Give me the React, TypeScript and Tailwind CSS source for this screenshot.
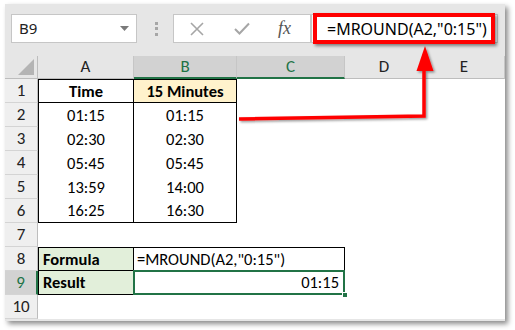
import type { ReactNode } from 'react'

const CELL_FONT = "font-['Calibri','Carlito','Lato',sans-serif]"
const UI_FONT = "font-['Segoe_UI','Noto_Sans',sans-serif]"

const times = [
  ['01:15', '01:15'],
  ['02:30', '02:30'],
  ['05:45', '05:45'],
  ['13:59', '14:00'],
  ['16:25', '16:30'],
]

function RowHead({ n, active = false }: { n: number; active?: boolean }) {
  return (
    <div
      className={`flex items-center justify-center border-b border-[#d4d4d4] text-[17px] ${CELL_FONT} ${
        active
          ? 'bg-[#d2d2d2] text-[#217346] border-r-2 border-r-[#217346]'
          : 'bg-[#efefef] text-[#222] border-r border-r-[#bdbdbd]'
      }`}
    >
      {n}
    </div>
  )
}

function ColHead({ label, active = false }: { label: string; active?: boolean }) {
  return (
    <div
      className={`flex items-center justify-center border-r border-[#c6c6c6] text-[17px] ${CELL_FONT} ${
        active
          ? 'bg-[#d2d2d2] text-[#217346] border-b-2 border-b-[#217346]'
          : 'bg-[#e6e6e6] text-[#222] border-b border-b-[#bdbdbd]'
      }`}
    >
      {label}
    </div>
  )
}

function Cell({ className = '', children }: { className?: string; children?: ReactNode }) {
  return <div className={`flex items-center text-[16.5px] text-black ${CELL_FONT} ${className}`}>{children}</div>
}

function Empty({ n = 3 }: { n?: number }) {
  return (
    <>
      {Array.from({ length: n }, (_, i) => (
        <div key={i} className="bg-white" />
      ))}
    </>
  )
}

export default function App() {
  return (
    <div className="relative h-[330px] w-[515px] overflow-hidden bg-white pl-[5px] pt-[4px]">
      <div className="h-[317px] w-[500px] bg-[#e6e6e6] shadow-[3px_3px_5px_rgba(0,0,0,0.45)]">
        {/* formula bar */}
        <div className="flex h-[52px] items-start pt-[10px]">
          <div className="ml-[6px] flex h-[29px] w-[126px] items-center justify-between border border-[#c6c6c6] bg-white pl-[7px] pr-[7px]">
            <span className={`text-[15px] text-[#222] ${UI_FONT}`}>B9</span>
            <svg width="9" height="5" viewBox="0 0 9 5">
              <path d="M0 0h9L4.5 5z" fill="#7a7a7a" />
            </svg>
          </div>
          <div className="ml-[17px] flex h-[29px] w-[4px] flex-col items-center justify-center gap-[2.5px]">
            <span className="h-[3px] w-[3px] bg-[#a6a6a6]" />
            <span className="h-[3px] w-[3px] bg-[#a6a6a6]" />
            <span className="h-[3px] w-[3px] bg-[#a6a6a6]" />
          </div>
          <div className="ml-[15px] flex h-[29px] w-[138px] items-center border border-[#c6c6c6] bg-white">
            <svg className="ml-[16px]" width="14" height="14" viewBox="0 0 14 14">
              <path d="M1 1l12 12M13 1L1 13" stroke="#a6a6a6" strokeWidth="1.6" fill="none" />
            </svg>
            <svg className="ml-[30px]" width="16" height="13" viewBox="0 0 16 13">
              <path d="M1 7l4.5 4.5L15 1.5" stroke="#a6a6a6" strokeWidth="2" fill="none" />
            </svg>
            <span className="ml-[28px] font-['Liberation_Serif',serif] text-[18px] italic text-[#555]">fx</span>
          </div>
          <div className="relative h-[29px] w-[187px] border border-[#c6c6c6] bg-white">
            <div className="absolute -top-[2px] left-[1px] flex h-[31px] w-[182px] items-center border-4 border-[#ff0000] pl-[10px] shadow-[2px_2px_3px_rgba(0,0,0,0.45)]">
              <span className={`text-[16px] text-black ${UI_FONT}`}>=MROUND(A2,"0:15")</span>
            </div>
          </div>
        </div>

        {/* sheet */}
        <div className="grid grid-cols-[33px_96px_103px_108px_79px_81px] grid-rows-[23px_repeat(10,24px)] bg-white">
          <div className="relative border-b border-r border-[#bdbdbd] bg-[#e6e6e6]">
            <svg className="absolute bottom-[3px] right-[3px]" width="16" height="16" viewBox="0 0 16 16">
              <path d="M16 0V16H0z" fill="#b4b4b4" />
            </svg>
          </div>
          <ColHead label="A" />
          <ColHead label="B" active />
          <ColHead label="C" active />
          <ColHead label="D" />
          <ColHead label="E" />

          <RowHead n={1} />
          <Cell className="justify-center border border-black font-bold">Time</Cell>
          <Cell className="justify-center border-y border-r border-black bg-[#fff2cc] font-bold">15 Minutes</Cell>
          <Empty />

          {times.map(([a, b], i) => {
            const last = i === times.length - 1
            return [
              <RowHead key={`h${i}`} n={i + 2} />,
              <Cell key={`a${i}`} className={`justify-center border-x border-black ${last ? 'border-b' : ''}`}>
                {a}
              </Cell>,
              <Cell key={`b${i}`} className={`justify-center border-r border-black ${last ? 'border-b' : ''}`}>
                {b}
              </Cell>,
              <Empty key={`e${i}`} />,
            ]
          })}

          <RowHead n={7} />
          <Empty n={5} />

          <RowHead n={8} />
          <Cell className="border border-black bg-[#e2efda] pl-[4px] font-bold">Formula</Cell>
          <Cell className="col-span-2 border-y border-r border-black pl-[3px]">=MROUND(A2,"0:15")</Cell>
          <Empty n={2} />

          <RowHead n={9} active />
          <Cell className="border-x border-b border-black bg-[#e2efda] pl-[4px] font-bold">Result</Cell>
          <Cell className="relative col-span-2 justify-end border-b border-r border-black pr-[5px]">
            01:15
            <span className="absolute -bottom-[1px] -left-[1px] -right-[1px] -top-[1px] border-2 border-[#217346]" />
            <span className="absolute -bottom-[4px] -right-[4px] h-[6px] w-[6px] border border-white bg-[#217346]" />
          </Cell>
          <Empty n={2} />

          <RowHead n={10} />
          <Empty n={5} />
        </div>
      </div>

      {/* annotation arrow */}
      <svg className="pointer-events-none absolute left-0 top-0" width="515" height="330" viewBox="0 0 515 330">
        <defs>
          <filter id="sh" x="-10%" y="-10%" width="130%" height="130%">
            <feDropShadow dx="1.5" dy="1.5" stdDeviation="1" floodColor="#000" floodOpacity="0.4" />
          </filter>
        </defs>
        <g filter="url(#sh)">
          <path d="M239 119L424 116V68" stroke="#ff0000" strokeWidth="3.5" fill="none" strokeLinejoin="miter" />
          <path d="M416.5 71L425 46L433.5 71z" fill="#ff0000" />
        </g>
      </svg>
    </div>
  )
}
